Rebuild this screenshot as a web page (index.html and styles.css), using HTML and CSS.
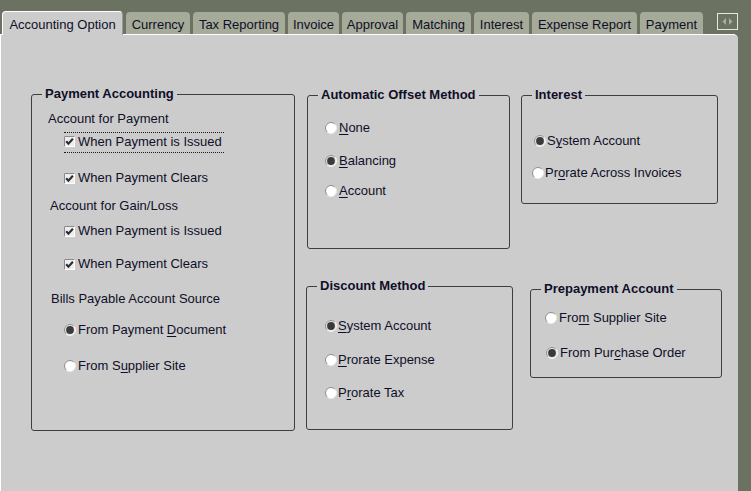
FILE: index.html
```html
<!DOCTYPE html>
<html>
<head>
<meta charset="utf-8">
<link rel="stylesheet" href="styles.css">
</head>
<body>
<svg class="defs" width="0" height="0">
  <symbol id="rb-off" viewBox="0 0 12 12">
    <circle cx="6" cy="6" r="5.5" fill="#fff" stroke="#ececec"/>
    <path d="M2.1 9.9A5.5 5.5 0 0 1 9.9 2.1" fill="none" stroke="#8c8c8c"/>
  </symbol>
  <symbol id="rb-on" viewBox="0 0 12 12">
    <circle cx="6" cy="6" r="5.5" fill="#e4e4e4" stroke="#f4f4f4"/>
    <path d="M2.1 9.9A5.5 5.5 0 0 1 9.9 2.1" fill="none" stroke="#8c8c8c"/>
    <circle cx="6" cy="6" r="3.9" fill="#3a3a3a"/>
  </symbol>
  <symbol id="cb-on" viewBox="0 0 11 11">
    <rect x="0.5" y="0.5" width="10" height="10" fill="#eeeeee" stroke="#fff"/>
    <path d="M0.5 10.5V0.5H10.5" fill="none" stroke="#8a8a8a"/>
    <path d="M2.2 5.2l2.2 2.5 4.5-5" fill="none" stroke="#2e2e2e" stroke-width="2.1"/>
  </symbol>
</svg>

<div class="tabs">
  <div class="tab active w-acc">Accounting Option</div>
  <div class="tab w-cur">Currency</div>
  <div class="tab w-tax">Tax Reporting</div>
  <div class="tab w-inv">Invoice</div>
  <div class="tab w-app">Approval</div>
  <div class="tab w-mat">Matching</div>
  <div class="tab w-int">Interest</div>
  <div class="tab w-exp">Expense Report</div>
  <div class="tab w-pay">Payment</div>
  <div class="tab-scroll">
    <svg width="19" height="15" viewBox="0 0 19 15"><path d="M8 4v7L4.5 7.5z" fill="#a9ae9f"/><path d="M11 4v7l3.5-3.5z" fill="#a9ae9f"/></svg>
  </div>
</div>

<div class="panel">
  <div class="groups">
    <div class="col col1">
      <div class="gbox b-pay">
        <div class="gtitle">Payment Accounting</div>
        <div class="gbody">
          <div class="row lbl-a">Account for Payment</div>
          <div class="row opt"><span class="focus"><svg class="cb"><use href="#cb-on"/></svg><span>When Payment is Issued</span></span></div>
          <div class="row opt"><svg class="cb"><use href="#cb-on"/></svg><span>When Payment Clears</span></div>
          <div class="row lbl-b">Account for Gain/Loss</div>
          <div class="row opt"><svg class="cb"><use href="#cb-on"/></svg><span>When Payment is Issued</span></div>
          <div class="row opt"><svg class="cb"><use href="#cb-on"/></svg><span>When Payment Clears</span></div>
          <div class="row lbl-c">Bills Payable Account Source</div>
          <div class="row opt"><svg class="rb"><use href="#rb-on"/></svg><span>From Payment <u>D</u>ocument</span></div>
          <div class="row opt"><svg class="rb"><use href="#rb-off"/></svg><span>From S<u>u</u>pplier Site</span></div>
        </div>
      </div>
    </div>

    <div class="col col2">
      <div class="gbox b-off">
        <div class="gtitle">Automatic Offset Method</div>
        <div class="gbody">
          <div class="row"><svg class="rb"><use href="#rb-off"/></svg><span><u>N</u>one</span></div>
          <div class="row"><svg class="rb"><use href="#rb-on"/></svg><span><u>B</u>alancing</span></div>
          <div class="row"><svg class="rb"><use href="#rb-off"/></svg><span><u>A</u>ccount</span></div>
        </div>
      </div>
      <div class="gbox b-disc">
        <div class="gtitle">Discount Method</div>
        <div class="gbody">
          <div class="row"><svg class="rb"><use href="#rb-on"/></svg><span><u>S</u>ystem Account</span></div>
          <div class="row"><svg class="rb"><use href="#rb-off"/></svg><span><u>P</u>rorate Expense</span></div>
          <div class="row"><svg class="rb"><use href="#rb-off"/></svg><span>P<u>r</u>orate Tax</span></div>
        </div>
      </div>
    </div>

    <div class="col col3">
      <div class="gbox b-int">
        <div class="gtitle">Interest</div>
        <div class="gbody">
          <div class="row"><svg class="rb"><use href="#rb-on"/></svg><span>S<u>y</u>stem Account</span></div>
          <div class="row"><svg class="rb"><use href="#rb-off"/></svg><span>Pr<u>o</u>rate Across Invoices</span></div>
        </div>
      </div>
      <div class="gbox b-pre">
        <div class="gtitle">Prepayment Account</div>
        <div class="gbody">
          <div class="row"><svg class="rb"><use href="#rb-off"/></svg><span>Fro<u>m</u> Supplier Site</span></div>
          <div class="row"><svg class="rb"><use href="#rb-on"/></svg><span>From Pur<u>c</u>hase Order</span></div>
        </div>
      </div>
    </div>
  </div>
</div>
</body>
</html>
```

FILE: styles.css
```css
* { box-sizing: border-box; }

html, body { margin: 0; padding: 0; }

body {
  width: 751px;
  height: 491px;
  overflow: hidden;
  background: #6b7262;
  font: 13px/16px "Liberation Sans", Arial, sans-serif;
  color: #0f0f28;
}

.defs { position: absolute; width: 0; height: 0; overflow: hidden; }

/* ---------- tab strip ---------- */
.tabs {
  display: flex;
  align-items: flex-end;
  gap: 3px;
  height: 34px;
  padding-left: 2px;
}

.tab {
  flex: none;
  height: 22px;
  padding-top: 5px;
  text-align: center;
  white-space: nowrap;
  background: #a5aa99;
  border-radius: 4px 4px 0 0;
}

.tab.active {
  height: 24px;
  margin-bottom: -1px;
  background: #cccccc;
  border: 1px solid #ffffff;
  border-bottom: none;
  border-right-color: #9a9a9a;
  position: relative;
  z-index: 1;
}

.w-acc { width: 121px; }
.w-cur { width: 64px; }
.w-tax { width: 92px; }
.w-inv { width: 51px; }
.w-app { width: 61px; }
.w-mat { width: 65px; }
.w-int { width: 55px; }
.w-exp { width: 105px; }
.w-pay { width: 63px; }

.tab-scroll {
  flex: none;
  align-self: flex-start;
  margin: 13px 0 0 11px;
  width: 21px;
  height: 17px;
  border: 1px solid #e4e6e0;
  display: flex;
  align-items: center;
  justify-content: center;
}

.tab-scroll svg { display: block; }

/* ---------- panel ---------- */
.panel {
  width: 738px;
  height: 457px;
  background: #cccccc;
  border-top: 1px solid #ffffff;
  border-left: 1px solid #ffffff;
  border-top-right-radius: 5px;
}

.groups {
  display: flex;
  align-items: flex-start;
  padding: 59px 0 0 30px;
}

.col {
  flex: none;
  display: flex;
  flex-direction: column;
  align-items: flex-start;
}

.col1 { width: 264px; }
.col2 { width: 207px; margin-left: 11px; }
.col3 { width: 200px; margin-left: 8px; }

/* ---------- group boxes ---------- */
.gbox {
  flex: none;
  border: 1px solid #3e3e3e;
  border-radius: 3px;
}

.gtitle {
  width: fit-content;
  margin: -9px 0 0 10px;
  padding: 0 3px;
  background: #cccccc;
  font-weight: bold;
  white-space: nowrap;
}

.gbody {
  display: grid;
  align-items: start;
}

.row {
  display: flex;
  align-items: center;
  height: 16px;
  white-space: nowrap;
}

.cb {
  flex: none;
  width: 11px;
  height: 11px;
  margin-right: 3px;
}

.rb {
  flex: none;
  width: 12px;
  height: 12px;
  margin: -1px 2px 0 0;
}

u { text-underline-offset: 2px; }

.focus {
  display: flex;
  align-items: center;
  margin-top: -2px;
  padding: 1px 2px 2px 0;
  border-top: 1px dotted #1a1a1a;
  border-bottom: 1px dotted #1a1a1a;
}

/* Payment Accounting */
.b-pay { width: 264px; height: 337px; }
.b-pay .gbody {
  margin-top: 9px;
  grid-template-rows: 24px 35px 28px 25px 33px 35px 31px 36px 16px;
}
.b-pay .lbl-a { padding-left: 16px; }
.b-pay .lbl-b { padding-left: 18px; }
.b-pay .lbl-c { padding-left: 19px; }
.b-pay .opt { padding-left: 32px; }

/* Automatic Offset Method */
.b-off { width: 203px; height: 154px; margin: 1px 0 0 1px; }
.b-off .gbody {
  margin-top: 17px;
  grid-template-rows: 33px 30px 16px;
}
.b-off .row { padding-left: 17px; }

/* Discount Method */
.b-disc { width: 207px; height: 144px; margin-top: 37px; }
.b-disc .gbody {
  margin-top: 24px;
  grid-template-rows: 34px 33px 16px;
}
.b-disc .row { padding-left: 18px; }
.b-disc .rb { margin-right: 1px; }

/* Interest */
.b-int { width: 197px; height: 109px; margin-top: 1px; }
.b-int .gbody {
  margin-top: 30px;
  grid-template-rows: 32px 16px;
}
.b-int .row { padding-left: 12px; }
.b-int .row + .row { padding-left: 10px; }
.b-int .rb { margin-right: 1px; }

/* Prepayment Account */
.b-pre { width: 192px; height: 89px; margin: 85px 0 0 9px; }
.b-pre .gbody {
  margin-top: 13px;
  grid-template-rows: 35px 16px;
}
.b-pre .row { padding-left: 14px; }
.b-pre .row + .row { padding-left: 15px; }
```
